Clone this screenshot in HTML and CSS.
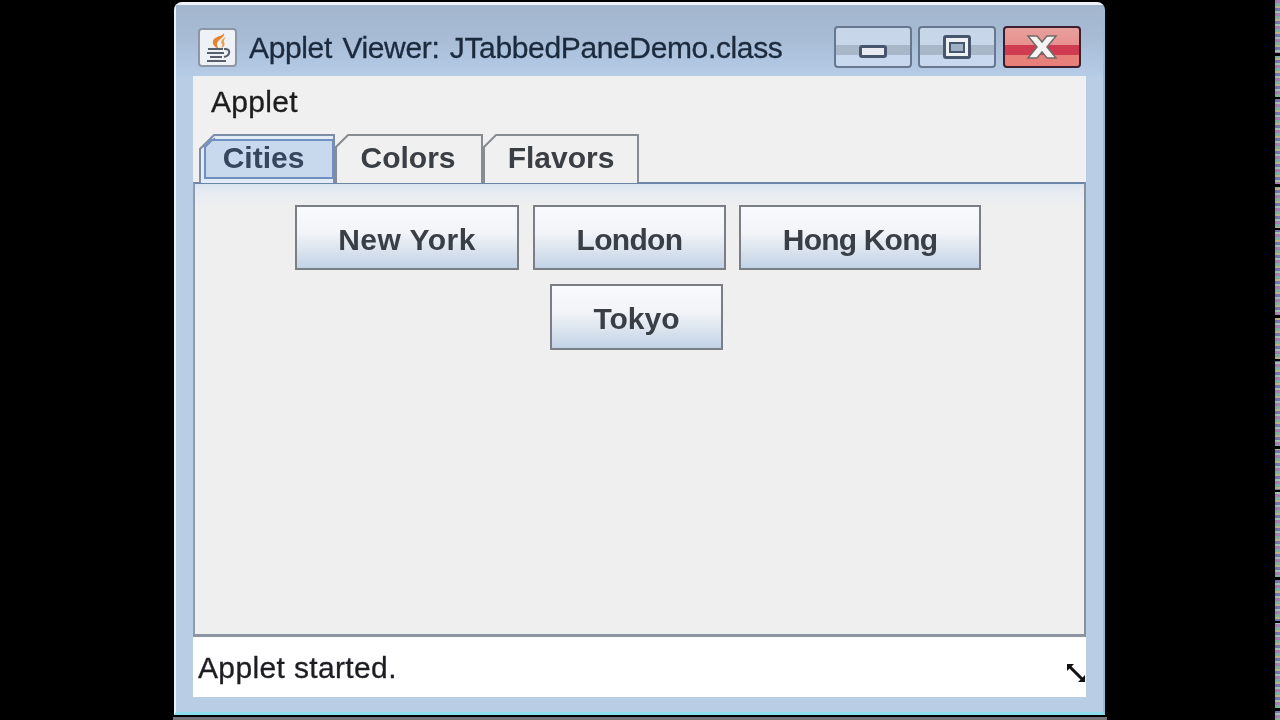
FILE: index.html
```html
<!DOCTYPE html>
<html lang="en">
<head>
<meta charset="utf-8">
<title>Applet Viewer: JTabbedPaneDemo.class</title>
<link rel="stylesheet" href="styles.css">
</head>
<body>
<div class="noise"></div>
<div class="floor"></div>
<main class="window">
  <header class="titlebar">
    <div class="app-icon">
      <svg width="40" height="40" viewBox="0 0 40 40">
        <rect x="1" y="1" width="37" height="37" rx="3" fill="#eef2f7" stroke="#8b97a6" stroke-width="2"/>
        <path d="M26 5c2 4-8 7-7 12 .3 2 2 4 2 4-5-2-8-6-5-10 3-3 9-3 10-6z" fill="#e8832a"/>
        <path d="M28 9c-4 2-6 4-4 7 .6 1 .2 3-1 4 4-1 4-4 3-6-.7-2 1-3 2-5z" fill="#eca34d"/>
        <path d="M10 21h15M9 25h17M12 29h12M9 33h19" stroke="#565f6b" stroke-width="2" fill="none"/>
        <path d="M26 21c7-1 7 6 0 8" stroke="#565f6b" stroke-width="2" fill="none"/>
      </svg>
    </div>
    <h1 class="title">Applet Viewer: JTabbedPaneDemo.class</h1>
    <div class="controls">
      <button class="ctl" aria-label="Minimize"><span class="min-glyph"></span></button>
      <button class="ctl" aria-label="Maximize"><span class="max-glyph"></span></button>
      <button class="ctl ctl-close" aria-label="Close">
        <svg width="32" height="26" viewBox="0 0 32 26">
          <path d="M2 2h9l5 6 5-6h9l-9 11 9 11h-9l-5-6-5 6H2l9-11z" fill="#f4f4f2" stroke="#6d6a68" stroke-width="1.500"/>
        </svg>
      </button>
    </div>
  </header>
  <div class="client">
    <div class="menubar"><span class="menu-item">Applet</span></div>
    <div class="tabstrip">
      <div class="tab tab-cities">
        <svg class="tab-shape" width="136" height="50" viewBox="0 0 136 50">
          <path d="M1 50V16L15 2H135V50" fill="#e3ebf5" stroke="#7d8ca6" stroke-width="2"/>
          <path d="M5 14L16 5" fill="none" stroke="#8a9ab0" stroke-width="1.500"/>
          <path d="M6 45V14L13 7H134V45z" fill="#c8d9ed" stroke="#6e8fc2" stroke-width="2"/>
        </svg>
        <span class="tab-label">Cities</span>
      </div>
      <div class="tab tab-colors">
        <svg class="tab-shape" width="148" height="50" viewBox="0 0 148 50">
          <path d="M1 50V14L13 2H147V50" fill="#f0f0f0" stroke="#878c92" stroke-width="2"/>
        </svg>
        <span class="tab-label">Colors</span>
      </div>
      <div class="tab tab-flavors">
        <svg class="tab-shape" width="156" height="50" viewBox="0 0 156 50">
          <path d="M1 50V14L13 2H155V50" fill="#f0f0f0" stroke="#878c92" stroke-width="2"/>
        </svg>
        <span class="tab-label">Flavors</span>
      </div>
    </div>
    <section class="panel">
      <div class="btn-row btn-row-first">
        <button class="city btn-ny">New York</button>
        <button class="city btn-london">London</button>
        <button class="city btn-hk">Hong Kong</button>
      </div>
      <div class="btn-row btn-row-second">
        <button class="city btn-tokyo">Tokyo</button>
      </div>
    </section>
    <footer class="status">
      <span class="status-text">Applet started.</span>
      <svg class="resize" width="18" height="18" viewBox="0 0 18 18">
        <path d="M3 3l12 12" stroke="#111" stroke-width="3" fill="none"/>
        <path d="M0 0h7L0 7zM18 18h-7l7-7z" fill="#111"/>
      </svg>
    </footer>
  </div>
</main>
</body>
</html>
```
FILE: styles.css
```css
* { box-sizing: border-box; }
html, body { margin: 0; height: 100%; }
body {
  width: 1280px;
  height: 720px;
  overflow: hidden;
  background: #000;
  position: relative;
  padding: 2px 0 0 174px;
  font-family: "Liberation Sans", Arial, sans-serif;
}
.noise {
  position: absolute;
  top: 0;
  right: 0;
  width: 5px;
  height: 720px;
  background:
    repeating-linear-gradient(180deg, transparent 0 53px, #000 53px 56px, transparent 56px 97px, #000 97px 99px, transparent 99px 131px),
    repeating-linear-gradient(180deg, rgba(170,120,180,.85) 0 3px, rgba(120,180,160,.85) 3px 6px, rgba(190,180,130,.85) 6px 8px, rgba(110,110,180,.85) 8px 11px, rgba(160,200,180,.85) 11px 13px),
    repeating-linear-gradient(90deg, #8a7a9a 0 2px, #a8b09a 2px 5px);
}
.floor {
  position: absolute;
  left: 173px;
  top: 717px;
  width: 934px;
  height: 3px;
  background: #77737a;
}
.window {
  width: 931px;
  height: 713px;
  display: flex;
  flex-direction: column;
  border-left: 2px solid #e9f2fa;
  border-right: 2px solid #8fc0dc;
  border-top: 3px solid #eef3f8;
  border-bottom: 3px solid #8fdcec;
  border-radius: 8px 8px 0 0;
  background: #b9cde5;
  padding-bottom: 15px;
  filter: blur(.7px);
}
.titlebar {
  height: 71px;
  flex: none;
  display: flex;
  align-items: flex-start;
  padding: 23px 22px 0 22px;
  background: linear-gradient(180deg, #a3b6ce 0, #a7bbd4 45%, #b6cce7 100%);
}
.app-icon { width: 40px; height: 40px; flex: none; }
.title {
  margin: 0 0 0 11px;
  font-size: 30px;
  font-weight: 400;
  line-height: 40px;
  letter-spacing: -.36px;
  word-spacing: 2.5px;
  -webkit-text-stroke: .3px #1b2a3d;
  color: #1b2a3d;
  white-space: nowrap;
  flex: 1;
}
.controls { display: flex; gap: 6px; margin-top: -2px; }
.ctl {
  width: 78px;
  height: 42px;
  padding: 0;
  border: 2px solid #66778e;
  border-radius: 4px;
  display: flex;
  align-items: center;
  justify-content: center;
  background: linear-gradient(180deg, #c8d6e9 0, #c8d6e9 46%, #a9b8c9 46%, #a9b8c9 72%, #c8d9ef 72%);
}
.ctl-close {
  margin-left: 1px;
  border-color: #3a2030;
  background: linear-gradient(180deg, #e8a09c 0, #e8908f 46%, #cf3c52 46%, #cf3c52 70%, #e8807a 70%);
}
.min-glyph {
  width: 28px;
  height: 13px;
  margin-top: 8px;
  border: 3px solid #46566c;
  border-radius: 3px;
  background: #e8ecf2;
}
.max-glyph {
  width: 28px;
  height: 24px;
  border: 3px solid #46566c;
  border-radius: 3px;
  background: #eef1f5;
  display: flex;
  align-items: center;
  justify-content: center;
}
.max-glyph::after {
  content: "";
  width: 12px;
  height: 7px;
  border: 2px solid #46566c;
  background: #9fb0c4;
}
.client {
  flex: 1;
  margin: 0 17px;
  min-height: 0;
  width: 893px;
  display: flex;
  flex-direction: column;
  background: #f0f0f0;
}
.menubar {
  height: 57px;
  flex: none;
  padding: 8px 0 0 18px;
}
.menu-item {
  font-size: 30px;
  line-height: 36px;
  letter-spacing: .3px;
  -webkit-text-stroke: .3px #1d1d1d;
  color: #1d1d1d;
}
.tabstrip {
  display: flex;
  height: 50px;
  flex: none;
  padding-left: 6px;
  margin-bottom: -1px;
  position: relative;
  z-index: 1;
}
.tab {
  position: relative;
  height: 50px;
  display: flex;
  align-items: center;
  justify-content: center;
  font-size: 30px;
  font-weight: 700;
  color: #3a3f45;
}
.tab-shape { position: absolute; left: 0; top: 0; }
.tab-label { position: relative; }
.tab-cities { width: 136px; padding-right: 7px; color: #34475d; }
.tab-colors { width: 148px; padding-right: 2px; }
.tab-flavors { width: 156px; }
.panel {
  flex: 1;
  min-height: 0;
  border-top: 2px solid #6c86aa;
  border-left: 2px solid #8b9bb0;
  border-right: 2px solid #8a9199;
  border-bottom: 3px solid #8d95a3;
  background: linear-gradient(180deg, #dae4f0 0, #e6ebf2 7px, #efefef 24px);
  padding-top: 21px;
  display: flex;
  flex-direction: column;
  align-items: center;
  gap: 14px;
}
.btn-row { display: flex; gap: 14px; }
.btn-row-first { margin-left: -3px; }
.btn-row-second { margin-left: -6px; }
.city {
  height: 65px;
  padding: 4px 0 0;
  border: 2px solid #7a7f86;
  font: 700 30px "Liberation Sans", Arial, sans-serif;
  color: #3a3f46;
  background: linear-gradient(180deg, #f8fafd 0, #f2f4f8 42%, #d7e1ed 75%, #c2d3e7 100%);
}
.btn-ny { width: 224px; letter-spacing: .45px; }
.btn-london { width: 193px; letter-spacing: -.7px; }
.btn-hk { width: 242px; margin-left: -1px; letter-spacing: -.8px; }
.btn-tokyo { width: 173px; height: 66px; }
.status {
  height: 60px;
  flex: none;
  background: #fff;
  display: flex;
  align-items: center;
  justify-content: space-between;
  padding: 2px 0 0 5px;
  position: relative;
}
.status-text {
  font-size: 30px;
  line-height: 36px;
  letter-spacing: .36px;
  -webkit-text-stroke: .3px #1c1c22;
  color: #1c1c22;
}
.resize { margin: 10px 1px 0 0; }
```
